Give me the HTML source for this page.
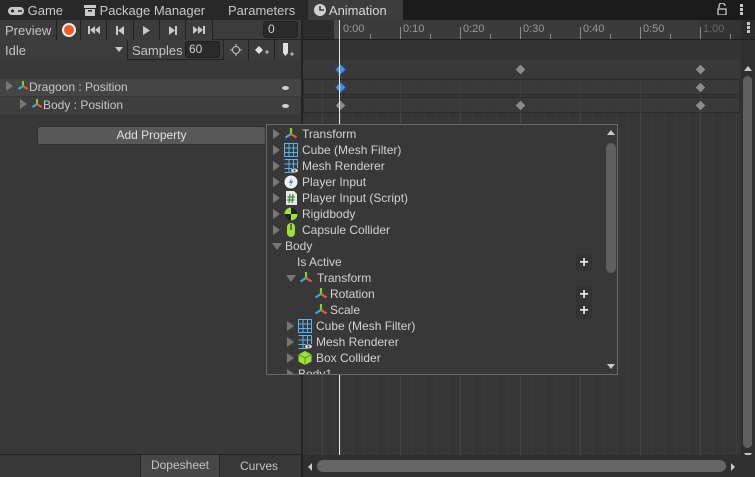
<!DOCTYPE html>
<html><head><meta charset="utf-8"><style>
*{margin:0;padding:0;box-sizing:border-box}
body{width:755px;height:477px;background:#383838;font-family:"Liberation Sans",sans-serif;font-size:12px;color:#c4c4c4;position:relative;overflow:hidden}
.a{position:absolute}
.t{position:absolute;white-space:nowrap}
.btn{position:absolute;background:#3c3c3c;border-right:1px solid #232323;height:20px;display:flex;align-items:center;justify-content:center;color:#c4c4c4}
.kd{position:absolute;width:9px;height:9px;transform:rotate(45deg);background:#8a8a8a;border:1px solid #2a2a2a}
.kb{background:#4d8de8;border-color:#223a66}
.row{position:absolute;left:0;width:755px;height:16px;display:flex;align-items:center;font-size:12px;color:#d2d2d2}
.tri{display:inline-block;width:0;height:0;border-left:7px solid #777;border-top:5px solid transparent;border-bottom:5px solid transparent;margin-right:4px}
.trd{display:inline-block;width:0;height:0;border-top:7px solid #777;border-left:5px solid transparent;border-right:5px solid transparent;margin-right:3px}
.plus{position:absolute;right:15px;width:16px;height:16px;background:#333;color:#e0e0e0;font-size:16px;line-height:15px;text-align:center;font-weight:bold}
.rl{position:absolute;top:23px;font-size:11px;color:#999}
</style></head><body>
<!-- tab bar -->
<div class="a" style="left:0;top:0;width:755px;height:20px;background:#1b1b1b"></div>
<div class="a" style="left:0;top:0;width:308px;height:20px;background:#282828"></div>
<div class="t" style="left:8px;top:3px;color:#c8c8c8;font-size:13px"><svg width="16" height="10" style="vertical-align:-1px"><rect x="0" y="1" width="16" height="8" rx="4" fill="#c8c8c8"/><circle cx="4.5" cy="5" r="1.5" fill="#282828"/><circle cx="11" cy="5" r="1" fill="#282828"/><circle cx="13" cy="5" r="1" fill="#282828"/></svg> Game</div>
<div class="t" style="left:84px;top:3px;color:#c8c8c8;font-size:13px"><svg width="12" height="11" style="vertical-align:-1px"><rect x="0" y="0" width="12" height="3" fill="#c8c8c8"/><rect x="1" y="4" width="10" height="7" fill="#c8c8c8"/><rect x="4" y="5" width="4" height="1.5" fill="#282828"/></svg> Package Manager</div>
<div class="t" style="left:228px;top:3px;color:#c8c8c8;font-size:13px">Parameters</div>
<div class="a" style="left:308px;top:0;width:95px;height:20px;background:#3c3c3c"></div>
<div class="t" style="left:314px;top:3px;color:#d8d8d8;font-size:13px"><svg width="12" height="12" style="vertical-align:-1px"><circle cx="6" cy="6" r="6" fill="#d0d0d0"/><path d="M6 2V6H10" stroke="#3c3c3c" stroke-width="1.6" fill="none"/></svg> Animation</div>
<svg class="a" style="left:717px;top:3px" width="10" height="12"><path d="M2 5V3a3 3 0 0 1 6 0" stroke="#c8c8c8" fill="none" stroke-width="1.3"/><rect x="1" y="6" width="8" height="6" fill="none" stroke="#c8c8c8" stroke-width="1.3"/></svg>
<div class="a" style="left:740px;top:4px;width:3px;height:3px;background:#c8c8c8;box-shadow:0 4px #c8c8c8,0 8px #c8c8c8"></div>

<!-- toolbar row 1 -->
<div class="a" style="left:0;top:20px;width:302px;height:20px;background:#3c3c3c;border-bottom:1px solid #232323"></div>
<div class="btn" style="left:0;top:20px;width:57px;justify-content:flex-start;padding-left:5px;font-size:13px">Preview</div>
<div class="btn" style="left:57px;top:20px;width:24px"><div style="width:14px;height:14px;border-radius:50%;background:#f0f0f0;display:flex;align-items:center;justify-content:center"><div style="width:10px;height:10px;border-radius:50%;background:#f05a28"></div></div></div>
<div class="btn" style="left:81px;top:20px;width:26px"><svg width="12" height="8"><rect x="0" y="0" width="2" height="8" fill="#c8c8c8"/><path d="M7 0V8L2 4Z M12 0V8L7 4Z" fill="#c8c8c8"/></svg></div>
<div class="btn" style="left:107px;top:20px;width:27px"><svg width="8" height="9"><rect x="0" y="0" width="2" height="9" fill="#c8c8c8"/><path d="M8 0V9L2 4.5Z" fill="#c8c8c8"/></svg></div>
<div class="btn" style="left:134px;top:20px;width:26px"><svg width="7" height="9"><path d="M0 0V9L7 4.5Z" fill="#c8c8c8"/></svg></div>
<div class="btn" style="left:160px;top:20px;width:26px"><svg width="8" height="9"><path d="M0 0V9L6 4.5Z" fill="#c8c8c8"/><rect x="6" y="0" width="2" height="9" fill="#c8c8c8"/></svg></div>
<div class="btn" style="left:186px;top:20px;width:27px"><svg width="12" height="8"><path d="M0 0V8L5 4Z M5 0V8L10 4Z" fill="#c8c8c8"/><rect x="10" y="0" width="2" height="8" fill="#c8c8c8"/></svg></div>
<div class="a" style="left:263px;top:21px;width:35px;height:17px;background:#2a2a2a;border:1px solid #212121;border-radius:3px;padding-left:4px;font-size:12px;line-height:15px;color:#d0d0d0">0</div>

<!-- toolbar row 2 -->
<div class="a" style="left:0;top:40px;width:302px;height:20px;background:#3c3c3c;border-bottom:1px solid #232323"></div>
<div class="btn" style="left:0;top:40px;width:128px;justify-content:flex-start;padding-left:5px;font-size:13px">Idle<span style="position:absolute;right:4px;top:7px;border-top:5px solid #c8c8c8;border-left:4px solid transparent;border-right:4px solid transparent"></span></div>
<div class="t" style="left:132px;top:43px;font-size:13px">Samples</div>
<div class="a" style="left:185px;top:41px;width:35px;height:17px;background:#2a2a2a;border:1px solid #212121;border-radius:3px;padding-left:3px;font-size:12px;line-height:15px;color:#d0d0d0">60</div>
<div class="btn" style="left:223px;top:40px;width:26px;border-left:1px solid #232323"><svg width="12" height="12"><circle cx="6" cy="6" r="3.5" stroke="#c8c8c8" fill="none"/><path d="M6 0V3M6 9V12M0 6H3M9 6H12" stroke="#c8c8c8"/></svg></div>
<div class="btn" style="left:249px;top:40px;width:26px"><svg width="14" height="10"><path d="M4 1L8 5L4 9L0 5Z" fill="#e0e0e0"/><path d="M10 7H14M12 5V9" stroke="#c8c8c8"/></svg></div>
<div class="btn" style="left:275px;top:40px;width:27px"><svg width="12" height="14"><path d="M1 0H6V10L3.5 13L1 10Z" fill="#e0e0e0"/><path d="M8 11H12M10 9V13" stroke="#c8c8c8"/></svg></div>

<!-- left rows -->
<div class="a" style="left:0;top:79px;width:302px;height:17px;background:#454545"></div>
<div class="a" style="left:0;top:97px;width:302px;height:17px;background:#3e3e3e"></div>
<div class="t" style="left:6px;top:80px;font-size:12px;color:#c8c8c8"><span class="tri"></span><svg width="12" height="12" style="vertical-align:-1px"><path d="M6 1V6" stroke="#7ed321" stroke-width="2"/><path d="M6 6L10.5 9" stroke="#f05a28" stroke-width="2"/><path d="M6 6L1.5 9" stroke="#40a8e8" stroke-width="2"/></svg>Dragoon : Position</div>
<div class="t" style="left:20px;top:98px;font-size:12px;color:#c8c8c8"><span class="tri"></span><svg width="12" height="12" style="vertical-align:-1px"><path d="M6 1V6" stroke="#7ed321" stroke-width="2"/><path d="M6 6L10.5 9" stroke="#f05a28" stroke-width="2"/><path d="M6 6L1.5 9" stroke="#40a8e8" stroke-width="2"/></svg>Body : Position</div>
<div class="a" style="left:282px;top:86px;width:7px;height:4px;border-radius:50%;background:#d0d0d0"></div>
<div class="a" style="left:282px;top:104px;width:7px;height:4px;border-radius:50%;background:#d0d0d0"></div>
<div class="a" style="left:37px;top:126px;width:229px;height:19px;background:#585858;border:1px solid #303030;border-radius:3px;text-align:center;line-height:17px;color:#e0e0e0;font-size:12px">Add Property</div>

<!-- bottom left -->
<div class="a" style="left:0;top:454px;width:302px;height:1px;background:#232323"></div>
<div class="a" style="left:140px;top:455px;width:80px;height:22px;background:#474747;border-left:1px solid #232323;border-right:1px solid #232323;text-align:center;line-height:21px;font-size:12px">Dopesheet</div>
<div class="t" style="left:240px;top:459px;font-size:12px">Curves</div>

<!-- timeline -->
<div class="a" style="left:301px;top:20px;width:2px;height:457px;background:#232323"></div>
<div class="a" style="left:303px;top:20px;width:452px;height:20px;background:#2c2c2c;border-bottom:1px solid #1e1e1e"></div>
<div class="a" style="left:334px;top:20px;width:366px;height:19px;background:#3a3a3a"></div>
<div class="a" style="left:700px;top:20px;width:41px;height:19px;background:#333"></div>
<div class="a" style="left:334px;top:20px;width:6px;height:19px;background:#4a4a4a"></div>
<svg class="a" style="left:303px;top:20px" width="440" height="20">
<g stroke="#8a8a8a" stroke-width="1">
<path d="M97.5 7V19M157.5 7V19M217.5 7V19M277.5 7V19M337.5 7V19M397.5 7V19"/>
<path d="M67.5 14V19M127.5 14V19M187.5 14V19M247.5 14V19M307.5 14V19M367.5 14V19M427.5 14V19"/>
</g></svg>
<div class="rl" style="left:343px">0:00</div>
<div class="rl" style="left:403px">0:10</div>
<div class="rl" style="left:463px">0:20</div>
<div class="rl" style="left:523px">0:30</div>
<div class="rl" style="left:583px">0:40</div>
<div class="rl" style="left:643px">0:50</div>
<div class="rl" style="left:703px;color:#666">1:00</div>
<div class="a" style="left:747px;top:22px;width:3px;height:3px;background:#c8c8c8;box-shadow:0 4px #c8c8c8,0 8px #c8c8c8"></div>

<div class="a" style="left:303px;top:40px;width:438px;height:20px;background:#333"></div>
<div class="a" style="left:303px;top:60px;width:438px;height:18px;background:#393939"></div>
<div class="a" style="left:303px;top:78px;width:438px;height:377px;background-color:#363636;background-image:repeating-linear-gradient(90deg,#444 0 1px,transparent 1px 60px),repeating-linear-gradient(90deg,#3b3b3b 0 1px,transparent 1px 12px);background-position:37px 0,37px 0"></div>
<div class="a" style="left:303px;top:79px;width:437px;height:16px;border:1px solid #2b2b2b;background:rgba(60,60,60,.5)"></div>
<div class="a" style="left:303px;top:97px;width:437px;height:16px;border:1px solid #2b2b2b;background:rgba(60,60,60,.5)"></div>
<div class="kd kb" style="left:336px;top:65px"></div>
<div class="kd" style="left:516px;top:65px"></div>
<div class="kd" style="left:696px;top:65px"></div>
<div class="kd kb" style="left:336px;top:83px"></div>
<div class="kd" style="left:696px;top:83px"></div>
<div class="kd" style="left:336px;top:101px"></div>
<div class="kd" style="left:516px;top:101px"></div>
<div class="kd" style="left:696px;top:101px"></div>

<!-- right scrollbar -->
<div class="a" style="left:741px;top:40px;width:14px;height:415px;background:#2f2f2f"></div>
<div class="a" style="left:744px;top:66px;border-bottom:5px solid #c8c8c8;border-left:4px solid transparent;border-right:4px solid transparent"></div>
<div class="a" style="left:743px;top:76px;width:9px;height:372px;border-radius:5px;background:#5f5f5f"></div>
<div class="a" style="left:744px;top:453px;border-top:5px solid #c8c8c8;border-left:4px solid transparent;border-right:4px solid transparent"></div>
<!-- bottom scrollbar -->
<div class="a" style="left:303px;top:455px;width:452px;height:22px;background:#2f2f2f"></div>
<div class="a" style="left:308px;top:463px;border-right:4px solid #c8c8c8;border-top:4px solid transparent;border-bottom:4px solid transparent"></div>
<div class="a" style="left:317px;top:460px;width:409px;height:12px;border-radius:6px;background:#656565"></div>
<div class="a" style="left:731px;top:463px;border-left:4px solid #c8c8c8;border-top:4px solid transparent;border-bottom:4px solid transparent"></div>

<!-- playhead -->
<div class="a" style="left:339px;top:20px;width:1px;height:435px;background:#e8e8e8"></div>

<!-- popup -->
<div class="a" style="left:266px;top:124px;width:352px;height:251px;background:#383838;border:1px solid #6a6a6a;overflow:hidden">
<div class="a" style="left:340px;top:5px;border-bottom:5px solid #c8c8c8;border-left:4px solid transparent;border-right:4px solid transparent"></div>
<div class="a" style="left:339px;top:18px;width:10px;height:130px;border-radius:5px;background:#5f5f5f"></div>
<div class="a" style="left:340px;top:239px;border-top:5px solid #c8c8c8;border-left:4px solid transparent;border-right:4px solid transparent"></div>
<div style="position:absolute;left:0;top:1px;width:340px">
<div class="row" style="top:0;left:6px"><span class="tri"></span><svg width="14" height="14" style="margin-right:4px"><path d="M7 1V7" stroke="#7ed321" stroke-width="2.2"/><path d="M7 7L12.5 10.5" stroke="#f05a28" stroke-width="2.2"/><path d="M7 7L1.5 10.5" stroke="#40a8e8" stroke-width="2.2"/></svg>Transform</div>
<div class="row" style="top:16px;left:6px"><span class="tri"></span><svg width="14" height="14" style="margin-right:4px"><path d="M.5 .5H13.5V13.5H.5ZM5 .5V13.5M9.5 .5V13.5M.5 5H13.5M.5 9.5H13.5" stroke="#5ab4ea" fill="none"/></svg>Cube (Mesh Filter)</div>
<div class="row" style="top:32px;left:6px"><span class="tri"></span><svg width="14" height="14" style="margin-right:4px"><path d="M.5 .5H13.5V9M9 13.5H.5ZM5 .5V13.5M9.5 .5V9M.5 5H13.5M.5 9.5H8" stroke="#5ab4ea" fill="none"/><ellipse cx="10.5" cy="11.5" rx="3.5" ry="2" fill="#ddd"/><circle cx="10.5" cy="11.5" r="1" fill="#333"/></svg>Mesh Renderer</div>
<div class="row" style="top:48px;left:6px"><span class="tri"></span><svg width="14" height="14" style="margin-right:4px"><circle cx="7" cy="7" r="6.5" fill="#f0f0f0"/><path d="M8 2L5 8H7L6 12L9 6H7Z" fill="#2a8ad8"/></svg>Player Input</div>
<div class="row" style="top:64px;left:6px"><span class="tri"></span><svg width="14" height="14" style="margin-right:4px"><path d="M2 0H10L13 3V14H2Z" fill="#e8e8e8"/><path d="M6 3L5 12M9 3L8 12M3.5 6H11M3 9H10.5" stroke="#3a8a3a" stroke-width="1.2"/></svg>Player Input (Script)</div>
<div class="row" style="top:80px;left:6px"><span class="tri"></span><svg width="14" height="14" style="margin-right:4px"><circle cx="7" cy="7" r="6.5" fill="#9de03a"/><path d="M7 .5A6.5 6.5 0 0 1 13.5 7H7ZM7 7V13.5A6.5 6.5 0 0 1 .5 7Z" fill="#222"/></svg>Rigidbody</div>
<div class="row" style="top:96px;left:6px"><span class="tri"></span><svg width="14" height="14" style="margin-right:4px"><rect x="3" y="0" width="8" height="14" rx="4" fill="#9de03a"/><path d="M7 1V7" stroke="#333" stroke-width="1.3"/></svg>Capsule Collider</div>
<div class="row" style="top:112px;left:5px"><span class="trd"></span>Body</div>
<div class="row" style="top:128px;left:30px">Is Active</div>
<div class="plus" style="top:129px">+</div>
<div class="row" style="top:144px;left:19px"><span class="trd"></span><svg width="14" height="14" style="margin-right:4px"><path d="M7 1V7" stroke="#7ed321" stroke-width="2.2"/><path d="M7 7L12.5 10.5" stroke="#f05a28" stroke-width="2.2"/><path d="M7 7L1.5 10.5" stroke="#40a8e8" stroke-width="2.2"/></svg>Transform</div>
<div class="row" style="top:160px;left:47px"><svg width="14" height="14" style="margin-right:2px"><path d="M7 1V7" stroke="#7ed321" stroke-width="2.2"/><path d="M7 7L12.5 10.5" stroke="#f05a28" stroke-width="2.2"/><path d="M7 7L1.5 10.5" stroke="#40a8e8" stroke-width="2.2"/></svg>Rotation</div>
<div class="plus" style="top:161px">+</div>
<div class="row" style="top:176px;left:47px"><svg width="14" height="14" style="margin-right:2px"><path d="M7 1V7" stroke="#7ed321" stroke-width="2.2"/><path d="M7 7L12.5 10.5" stroke="#f05a28" stroke-width="2.2"/><path d="M7 7L1.5 10.5" stroke="#40a8e8" stroke-width="2.2"/></svg>Scale</div>
<div class="plus" style="top:177px">+</div>
<div class="row" style="top:192px;left:20px"><span class="tri"></span><svg width="14" height="14" style="margin-right:4px"><path d="M.5 .5H13.5V13.5H.5ZM5 .5V13.5M9.5 .5V13.5M.5 5H13.5M.5 9.5H13.5" stroke="#5ab4ea" fill="none"/></svg>Cube (Mesh Filter)</div>
<div class="row" style="top:208px;left:20px"><span class="tri"></span><svg width="14" height="14" style="margin-right:4px"><path d="M.5 .5H13.5V9M9 13.5H.5ZM5 .5V13.5M9.5 .5V9M.5 5H13.5M.5 9.5H8" stroke="#5ab4ea" fill="none"/><ellipse cx="10.5" cy="11.5" rx="3.5" ry="2" fill="#ddd"/><circle cx="10.5" cy="11.5" r="1" fill="#333"/></svg>Mesh Renderer</div>
<div class="row" style="top:224px;left:20px"><span class="tri"></span><svg width="14" height="14" style="margin-right:4px"><path d="M7 0L13.5 3.5V10.5L7 14L.5 10.5V3.5Z" fill="#9de03a"/><path d="M.5 3.5L7 7L13.5 3.5M7 7V14" stroke="#5a9a1a" fill="none"/></svg>Box Collider</div>
<div class="row" style="top:240px;left:20px"><span class="tri"></span>Body1</div>
</div>
</div>
</body></html>
